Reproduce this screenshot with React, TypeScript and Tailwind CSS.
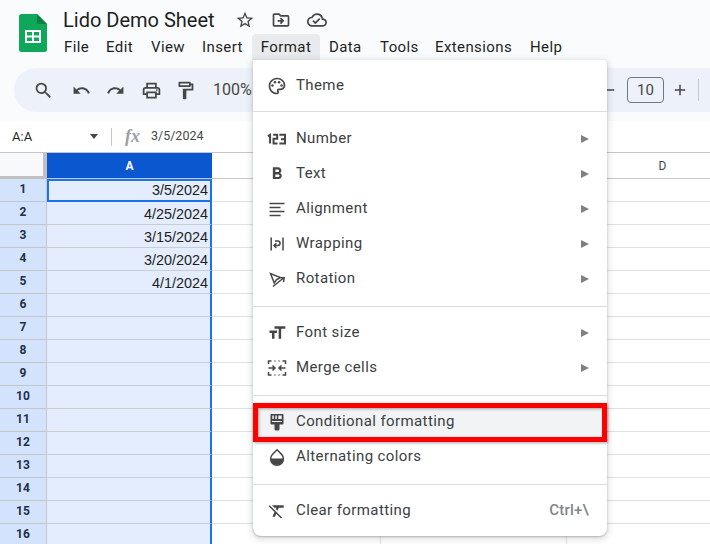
import React from "react";
import {
  MdStarBorder, MdOutlineDriveFileMove, MdOutlineCloudDone, MdSearch, MdUndo, MdRedo, MdOutlinePrint,
  MdOutlineFormatPaint, MdOutlinePalette, MdFormatBold, MdFormatSize, MdFormatClear, MdAdd, MdRemove,
} from "react-icons/md";

const roboto = "font-['Roboto',sans-serif]";
const dates = ["3/5/2024", "4/25/2024", "3/15/2024", "3/20/2024", "4/1/2024"];
const rows = Array.from({ length: 16 }, (_, i) => i + 1);

function Logo() {
  return (
    <svg width="28" height="38" viewBox="0 0 28 38">
      <path d="M2.5 0H18l10 10v25.5a2.5 2.5 0 0 1-2.5 2.5h-23A2.5 2.5 0 0 1 0 35.5v-33A2.5 2.5 0 0 1 2.5 0z" fill="#0fa85a" />
      <path d="M18 0l10 10h-7.5A2.5 2.5 0 0 1 18 7.5z" fill="#0b8043" />
      <path d="M6 16h16v13H6z" fill="#fff" />
      <path d="M8 18h5v3.5H8zM15 18h5v3.5h-5zM8 23.5h5V27H8zM15 23.5h5V27h-5z" fill="#0fa85a" />
    </svg>
  );
}

function Ic123() {
  return (
    <svg width="22" height="20" viewBox="0 0 22 20" fill="none" stroke="#444746" strokeWidth="2.2">
      <path d="M1 6.800l2.400-1.400V15M6.800 5.400h4.400v4.300H7.200V15h4.400M13.600 5.400h6.200V15h-6.200M15.400 10.200h4.400" />
    </svg>
  );
}
function IcAlign() {
  return (
    <svg width="18" height="18" viewBox="0 0 18 18" fill="none" stroke="#444746" strokeWidth="1.6">
      <path d="M1.500 3.500h15M1.500 7.500h11M1.500 11.500h15M1.500 15.500h11" />
    </svg>
  );
}
function IcWrap() {
  return (
    <svg width="18" height="18" viewBox="0 0 18 18" fill="none" stroke="#444746" strokeWidth="1.5">
      <path d="M3.200 2.500v13M15 2.500v13M6.500 10.500h3.300a2.100 2.100 0 0 0 0-4.500H7" />
      <path d="M8.400 8.200l-2.500 2.400 2.500 2.300" />
    </svg>
  );
}
function IcRotate() {
  return (
    <svg width="18" height="18" viewBox="0 0 18 18" fill="none" stroke="#444746" strokeWidth="1.5">
      <path d="M2.500 3.500l3.700 9.500 2.200-3.200 4-2.200zM5 16.500L15.500 8M11.500 7.400l4.600.2-.6 4.500" />
    </svg>
  );
}
function IcMerge() {
  return (
    <svg width="20" height="20" viewBox="0 0 20 20" fill="none" stroke="#444746" strokeWidth="1.500">
      <path d="M1.500 6V3h3M1.500 14v3h3M18.500 6V3h-3M18.500 14v3h-3M1.500 10h6M5.500 7.500L8 10l-2.500 2.500M18.500 10h-6M14.500 7.500L12 10l2.500 2.500M7.500 3h1M11.500 3h1M7.500 17h1M11.500 17h1" />
    </svg>
  );
}
function IcCond() {
  return (
    <svg width="18" height="18" viewBox="0 0 18 18">
      <path d="M3.500 1h11a1 1 0 0 1 1 1v8.500a1 1 0 0 1-1 1h-3V16a1.500 1.500 0 0 1-1.500 1.500H8A1.500 1.500 0 0 1 6.500 16v-4.500h-3a1 1 0 0 1-1-1V2a1 1 0 0 1 1-1z" fill="#444746" />
      <path d="M4.300 2.600h1.500V6H4.300zM7.300 2.600h1.500V6H7.300zM10.300 2.600h3.400V6h-3.400z" fill="#f1f3f4" />
      <path d="M4 8h10v1H4z" fill="#f1f3f4" />
    </svg>
  );
}
function IcDrop() {
  return (
    <svg width="18" height="18" viewBox="0 0 18 18">
      <path d="M9 1.800l4.600 4.600a6.400 6.400 0 1 1-9.200 0z" fill="none" stroke="#444746" strokeWidth="1.500" />
      <path d="M2.700 10.500h12.600a6.300 6.300 0 0 1-12.600 0z" fill="#444746" />
    </svg>
  );
}

function Item({ icon, label, arrow, right }: { icon: React.ReactNode; label: string; arrow?: boolean; right?: string }) {
  return (
    <div className="flex h-[35px] items-center pl-[14px] pr-[18px]">
      <span className="flex w-5 items-center justify-center text-[#444746]">{icon}</span>
      <span className="ml-[9px] flex-1 text-[15px] tracking-[0.4px] text-[#3c4043]">{label}</span>
      {arrow && <span className="border-y-[4.500px] border-l-[8px] border-y-transparent border-l-[#808080]" />}
      {right && <span className="text-[15px] font-medium tracking-[0.2px] text-[#80868b]">{right}</span>}
    </div>
  );
}

export default function App() {
  return (
    <div className={`relative h-[544px] w-[710px] overflow-hidden bg-white ${roboto}`}>
      <header className="h-[121px] bg-[#f9fbfd] pt-[8px]">
        <div className="flex">
          <div className="ml-[19px] mt-[6px]"><Logo /></div>
          <div className="ml-[16px]">
            <div className="flex h-[24px] items-center">
              <span className="text-[20px] text-[#1f1f1f]">Lido Demo Sheet</span>
              <span className="ml-[20px] flex gap-[16px] text-[#444746]">
                <MdStarBorder size={20} />
                <MdOutlineDriveFileMove size={20} />
                <MdOutlineCloudDone size={20} />
              </span>
            </div>
            <nav className="mt-[2px] flex h-[26px] items-center text-[15px] tracking-[0.4px] text-[#1f1f1f]">
              <span className="w-[43px] pl-[1px]">File</span>
              <span className="w-[45px]">Edit</span>
              <span className="w-[51px]">View</span>
              <span className="w-[50px]">Insert</span>
              <span className="flex h-[26px] w-[68px] items-center justify-center rounded-t-[4px] bg-[#e8eaed]">Format</span>
              <span className="ml-[9px] w-[51px]">Data</span>
              <span className="w-[55px]">Tools</span>
              <span className="w-[95px]">Extensions</span>
              <span>Help</span>
            </nav>
          </div>
        </div>
        <div className="ml-[14px] mt-[8px] flex h-[44px] items-center justify-between rounded-l-[22px] bg-[#edf2fa] pl-[19px] pr-[11px] text-[#444746]">
          <div className="flex items-center">
            <MdSearch size={21} />
            <MdUndo size={19} className="ml-[18px]" />
            <MdRedo size={19} className="ml-[15px]" />
            <MdOutlinePrint size={21} className="ml-[16px]" />
            <MdOutlineFormatPaint size={21} className="ml-[13px]" />
            <span className="ml-[17px] text-[16px]">100%</span>
          </div>
          <div className="flex items-center">
            <MdRemove size={18} />
            <span className="ml-[9px] flex h-[26px] w-[37px] items-center justify-center rounded-[4px] border border-[#747775] text-[15px]">10</span>
            <MdAdd size={18} className="ml-[7px]" />
            <span className="ml-[9px] h-[22px] w-px bg-[#c7c7c7]" />
          </div>
        </div>
      </header>

      <div className="flex h-[31px] items-center text-[#444746]">
        <span className="ml-[12px] w-[78px] text-[13px] text-[#1f1f1f]">A:A</span>
        <span className="border-x-[4.500px] border-t-[5px] border-x-transparent border-t-[#444746]" />
        <span className="ml-[13px] h-[18px] w-px bg-[#c7c7c7]" />
        <span className="ml-[13px] w-[16px] font-['Liberation_Serif',serif] text-[18px] font-bold italic text-[#9aa0a6]">fx</span>
        <span className="ml-[10px] text-[12.500px]">3/5/2024</span>
      </div>

      <div className="flex h-[27px] border-t border-[#c4c7c5] text-[12px]">
        <div className="w-[47px] shrink-0 border-b-[3px] border-r-[4px] border-[#c0c0c0] bg-[#f8f9fa]" />
        <div className="flex w-[165px] shrink-0 items-center justify-center border-b border-[#c4c7c5] bg-[#0b57d0] pt-[1px] font-bold text-white">A</div>
        <div className="w-[169px] shrink-0 border-b border-[#c4c7c5]" />
        <div className="w-[186px] shrink-0 border-b border-[#c4c7c5]" />
        <div className="flex w-[190px] shrink-0 items-center justify-center border-b border-l border-[#c4c7c5] text-[#444746]">D</div>
      </div>

      {rows.map((r) => (
        <div key={r} className="flex h-[23px]">
          <div className="flex w-[47px] shrink-0 items-center justify-center border-b border-r border-[#c4c7c5] bg-[#d3e3fd] pb-[3px] text-[12px] font-bold text-[#1f2f4a]">{r}</div>
          <div className={`flex w-[165px] shrink-0 items-center justify-end border-r-2 border-r-[#1a73e8] bg-[#e3edfd] pr-[2px] font-['Liberation_Sans',sans-serif] text-[14.400px] text-[#1f1f1f] ${r === 1 ? "border-2 border-[#1a73e8] pt-[1px]" : "border-b border-b-[#c9ced6] pt-[3px]"}`}>
            {dates[r - 1]}
          </div>
          <div className="w-[169px] shrink-0 border-b border-r border-[#e1e1e1]" />
          <div className="w-[186px] shrink-0 border-b border-r border-[#e1e1e1]" />
          <div className="w-[190px] shrink-0 border-b border-[#e1e1e1]" />
        </div>
      ))}

      <div className="absolute left-[253px] top-[60px] h-[476px] w-[354px] rounded-b-[8px] rounded-tr-[4px] bg-white pt-[8px] shadow-[0_2px_6px_2px_rgba(60,64,67,0.15),0_1px_2px_rgba(60,64,67,0.3)]">
        <Item icon={<MdOutlinePalette size={20} />} label="Theme" />
        <div className="mt-[8px] mb-[9px] h-px bg-[#dadce0]" />
        <Item icon={<Ic123 />} label="Number" arrow />
        <Item icon={<MdFormatBold size={24} />} label="Text" arrow />
        <Item icon={<IcAlign />} label="Alignment" arrow />
        <Item icon={<IcWrap />} label="Wrapping" arrow />
        <Item icon={<IcRotate />} label="Rotation" arrow />
        <div className="mt-[10px] mb-[8px] h-px bg-[#dadce0]" />
        <Item icon={<MdFormatSize size={20} />} label="Font size" arrow />
        <Item icon={<IcMerge />} label="Merge cells" arrow />
        <div className="mt-[10px] mb-[8px] h-px bg-[#dadce0]" />
        <div className="relative bg-[#f1f3f4]">
          <Item icon={<IcCond />} label="Conditional formatting" />
          <div className="absolute inset-x-0 -top-[1px] -bottom-[3px] border-[5px] border-[#fe0000] shadow-[1px_1px_3px_rgba(0,0,0,0.35),inset_1px_1px_3px_rgba(0,0,0,0.35)]" />
        </div>
        <Item icon={<IcDrop />} label="Alternating colors" />
        <div className="mt-[10px] mb-[8px] h-px bg-[#dadce0]" />
        <Item icon={<MdFormatClear size={20} />} label="Clear formatting" right="Ctrl+\" />
      </div>
    </div>
  );
}
